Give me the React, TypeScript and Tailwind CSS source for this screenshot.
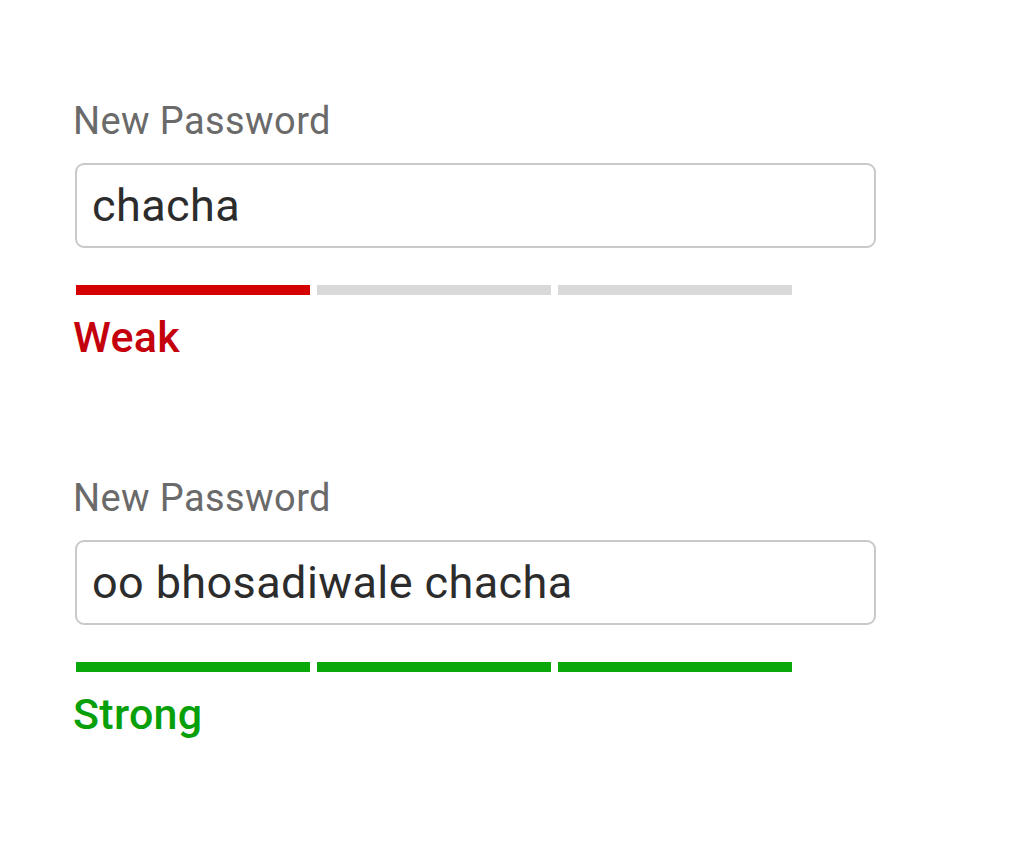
type Strength = {
	label: string;
	value: string;
	filled: number;
	status: string;
	color: string;
	bar: string;
};

const campos: Strength[] = [
	{ label: "New Password", value: "chacha", filled: 1, status: "Weak", color: "text-[#c4000c]", bar: "bg-[#d50000]" },
	{ label: "New Password", value: "oo bhosadiwale chacha", filled: 3, status: "Strong", color: "text-[#08a00a]", bar: "bg-[#0aa80a]" },
];

function CampoSenha({ campo }: { campo: Strength }) {
	return (
		<div className="flex flex-col">
			<label className="text-[38px] leading-[44px] text-[#6a6a6a] tracking-[0.4px]">{campo.label}</label>
			<div className="mt-[20px] ml-[2px] w-[801px] h-[85px] rounded-[9px] border-2 border-[#c9c9c9] flex items-center px-[15px]">
				<span className="text-[45px] leading-none text-[#2c2c2c] tracking-[0.4px]">{campo.value}</span>
			</div>
			<div className="mt-[37px] ml-[3px] flex gap-[7px] w-[716px]">
				{[0, 1, 2].map((i) => (
					<div key={i} className={"h-[10px] flex-1 " + (i < campo.filled ? campo.bar : "bg-[#d9d9d9]")} />
				))}
			</div>
			<span className={"mt-[17px] text-[43px] leading-[50px] font-medium tracking-[0.3px] " + campo.color}>{campo.status}</span>
		</div>
	);
}

export default function App() {
	return (
		<div className="w-[1024px] h-[842px] bg-white pl-[73px] pt-[99px] flex flex-col gap-[114px]" style={{ fontFamily: "Roboto, 'Noto Sans', sans-serif" }}>
			{campos.map((c, i) => (
				<CampoSenha key={i} campo={c} />
			))}
		</div>
	);
}
